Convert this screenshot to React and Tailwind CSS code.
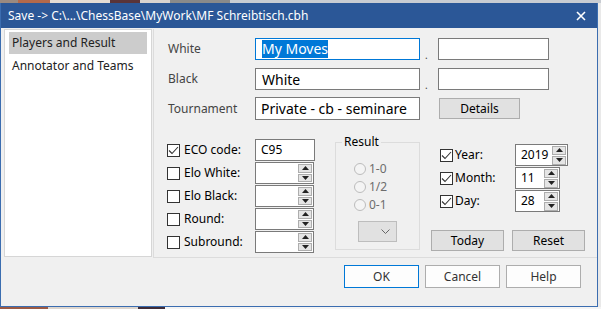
import React from "react";

function Check({ checked }) {
  return (
    <span className="w-[13px] h-[13px] border border-[#333333] bg-white flex items-center justify-center shrink-0">
      {checked && (
        <svg width="11" height="9" viewBox="0 0 11 9">
          <path d="M1 4.5 L4 7.5 L10 1" fill="none" stroke="#333333" strokeWidth="1.1" />
        </svg>
      )}
    </span>
  );
}

function SpinButtons() {
  return (
    <div className="flex flex-col gap-[1px] py-[1px] pr-[1px]">
      <div className="w-[14px] h-[9px] border border-[#adadad] bg-[#e5e5e5] flex items-center justify-center">
        <svg width="7" height="4" viewBox="0 0 7 4"><path d="M0 4 L3.5 0 L7 4 Z" fill="#222" /></svg>
      </div>
      <div className="w-[14px] h-[9px] border border-[#adadad] bg-[#e5e5e5] flex items-center justify-center">
        <svg width="7" height="4" viewBox="0 0 7 4"><path d="M0 0 L3.5 4 L7 0 Z" fill="#222" /></svg>
      </div>
    </div>
  );
}

function Radio({ label }) {
  return (
    <div className="flex items-center h-[18px] gap-[3px]">
      <span className="w-[12px] h-[12px] rounded-full border border-[#bcbcbc] bg-[#f4f4f4] shrink-0" />
      <span className="text-[12px] text-[#6d6d6d]">{label}</span>
    </div>
  );
}

export default function App() {
  const checkRows = [
    { label: "Elo White:" },
    { label: "Elo Black:" },
    { label: "Round:" },
    { label: "Subround:" },
  ];

  return (
    <div className="w-[601px] h-[309px] bg-[#e9e9e9] overflow-hidden font-['Segoe_UI','Noto_Sans',sans-serif] relative">
      {/* background strip */}
      <div className="flex h-[3px]">
        <div className="w-[18px] bg-[#9a8a80]" />
        <div className="w-[32px] bg-[#b4694a]" />
        <div className="w-[60px] bg-[#e6ddd4]" />
        <div className="w-[30px] bg-[#5a3438]" />
        <div className="w-[30px] bg-[#d9d3cf]" />
        <div className="w-[60px] bg-[#8a8a8a]" />
        <div className="flex-1 bg-[#c8ccd2]" />
      </div>

      {/* dialog */}
      <div className="w-[598px] h-[304px] flex flex-col bg-[#f0f0f0] border-x border-b border-[#3b6db0]">
        {/* title bar */}
        <div className="h-[25px] bg-[#2b5797] flex items-center justify-between pl-[7px] pr-[11px] text-white text-[12px] shrink-0">
          <span>Save -&gt; C:\...\ChessBase\MyWork\MF Schreibtisch.cbh</span>
          <svg width="10" height="10" viewBox="0 0 10 10">
            <path d="M1 1 L9 9 M9 1 L1 9" stroke="white" strokeWidth="1.6" />
          </svg>
        </div>

        {/* main */}
        <div className="flex h-[230px] pl-[3px] pt-[1px] shrink-0">
          {/* list */}
          <div className="w-[148px] h-[228px] bg-white border border-[#d6d6d6] pt-[2px] px-[4px] text-[12px] text-[#222]">
            <div className="h-[22px] bg-[#cccccc] flex items-center px-[3px]">Players and Result</div>
            <div className="h-[24px] flex items-center px-[3px]">Annotator and Teams</div>
          </div>

          {/* right panel */}
          <div className="flex-1 ml-[1px] border-l border-b border-[#dcdcdc] pl-[14px] pt-[9px]">
            <div className="flex flex-col gap-[8px]">
              <div className="flex items-center h-[22px]">
                <span className="w-[87px] text-[12px] text-[#444]">White</span>
                <div className="w-[165px] h-[22px] border border-[#0078d7] bg-white flex items-center pl-[6px]">
                  <span className="bg-[#0078d7] text-white text-[14px] leading-[18px]">My Moves</span>
                </div>
                <span className="w-[18px] h-[22px] flex items-end pl-[5px] text-[10px] leading-[10px] text-[#444]">.</span>
                <div className="w-[111px] h-[22px] border border-[#7a7a7a] bg-white" />
              </div>
              <div className="flex items-center h-[22px]">
                <span className="w-[87px] text-[12px] text-[#444]">Black</span>
                <div className="w-[165px] h-[22px] border border-[#7a7a7a] bg-white flex items-center pl-[6px] text-[14px] text-black">
                  White
                </div>
                <span className="w-[18px] h-[22px] flex items-end pl-[5px] text-[10px] leading-[10px] text-[#444]">.</span>
                <div className="w-[111px] h-[22px] border border-[#7a7a7a] bg-white" />
              </div>
            </div>

            <div className="flex items-center h-[23px] mt-[7px]">
              <span className="w-[87px] text-[12px] text-[#444]">Tournament</span>
              <div className="w-[165px] h-[23px] border border-[#7a7a7a] bg-white flex items-center pl-[5px] text-[14px] text-black">
                Private - cb - seminare
              </div>
              <div className="ml-[19px] w-[81px] h-[21px] border border-[#adadad] bg-[#e1e1e1] flex items-center justify-center text-[12px] text-black">
                Details
              </div>
            </div>

            {/* lower section */}
            <div className="flex mt-[19px]">
              {/* col A */}
              <div className="flex flex-col gap-[1px] w-[148px] -ml-[1px]">
                <div className="flex items-center h-[22px]">
                  <div className="w-[88px] flex items-center gap-[4px]">
                    <Check checked />
                    <span className="text-[12px] text-black">ECO code:</span>
                  </div>
                  <div className="w-[60px] h-[22px] border border-[#7a7a7a] bg-white flex items-center pl-[5px] text-[12px] text-black">
                    C95
                  </div>
                </div>
                {checkRows.map((r) => (
                  <div key={r.label} className="flex items-center h-[22px]">
                    <div className="w-[88px] flex items-center gap-[4px]">
                      <Check />
                      <span className="text-[12px] text-black">{r.label}</span>
                    </div>
                    <div className="w-[59px] h-[22px] border border-[#7a7a7a] bg-white flex justify-end">
                      <SpinButtons />
                    </div>
                  </div>
                ))}
              </div>

              {/* col B: result */}
              <fieldset className="ml-[20px] mt-[-4px] w-[85px] h-[115px] border border-[#dcdcdc] px-0">
                <legend className="ml-[6px] px-[2px] text-[12px] text-black leading-[14px]">Result</legend>
                <div className="flex flex-col items-start pl-[18px] pt-[11px]">
                  <Radio label="1-0" />
                  <Radio label="1/2" />
                  <Radio label="0-1" />
                  <div className="mt-[7px] ml-[4px] w-[39px] h-[21px] shrink-0 border border-[#bdbdbd] bg-[#e1e1e1] flex items-center justify-end pr-[6px]">
                    <svg width="9" height="5" viewBox="0 0 9 5"><path d="M0.5 0.5 L4.5 4.5 L8.5 0.5" fill="none" stroke="#666" strokeWidth="1" /></svg>
                  </div>
                </div>
              </fieldset>

              {/* col C */}
              <div className="ml-[11px] flex flex-col">
                <div className="flex flex-col pl-[9px] mt-[5px] gap-[1px]">
                  <div className="flex items-center h-[22px]">
                    <div className="w-[75px] flex items-center gap-[2px]">
                      <Check checked />
                      <span className="text-[12px] text-black">Year:</span>
                    </div>
                    <div className="w-[53px] h-[22px] border border-[#7a7a7a] bg-white flex items-center justify-between pl-[5px] text-[12px] text-black">
                      2019
                      <SpinButtons />
                    </div>
                  </div>
                  <div className="flex items-center h-[22px]">
                    <div className="w-[75px] flex items-center gap-[2px]">
                      <Check checked />
                      <span className="text-[12px] text-black">Month:</span>
                    </div>
                    <div className="w-[45px] h-[22px] border border-[#7a7a7a] bg-white flex items-center justify-between pl-[5px] text-[12px] text-black">
                      11
                      <SpinButtons />
                    </div>
                  </div>
                  <div className="flex items-center h-[22px]">
                    <div className="w-[75px] flex items-center gap-[2px]">
                      <Check checked />
                      <span className="text-[12px] text-black">Day:</span>
                    </div>
                    <div className="w-[45px] h-[22px] border border-[#7a7a7a] bg-white flex items-center justify-between pl-[5px] text-[12px] text-black">
                      28
                      <SpinButtons />
                    </div>
                  </div>
                </div>
                <div className="flex gap-[8px] mt-[18px]">
                  <div className="w-[73px] h-[21px] border border-[#adadad] bg-[#e1e1e1] flex items-center justify-center text-[12px] text-black">
                    Today
                  </div>
                  <div className="w-[73px] h-[21px] border border-[#adadad] bg-[#e1e1e1] flex items-center justify-center text-[12px] text-black">
                    Reset
                  </div>
                </div>
              </div>
            </div>
          </div>
        </div>

        {/* bottom buttons */}
        <div className="flex justify-end gap-[6px] pr-[16px] pt-[7px]">
          <div className="w-[75px] h-[23px] border border-[#0078d7] bg-[#fdfdfd] flex items-center justify-center text-[12px] text-[#333]">
            OK
          </div>
          <div className="w-[75px] h-[23px] border border-[#adadad] bg-[#fdfdfd] flex items-center justify-center text-[12px] text-[#333]">
            Cancel
          </div>
          <div className="w-[75px] h-[23px] border border-[#adadad] bg-[#fdfdfd] flex items-center justify-center text-[12px] text-[#333]">
            Help
          </div>
        </div>
      </div>

      <div className="flex h-[2px]">
        <div className="w-[48px] bg-[#9c5a44]" />
        <div className="w-[90px] bg-[#ddd6cf]" />
        <div className="w-[27px] bg-[#3e2c38]" />
        <div className="flex-1 bg-[#f4f4f4]" />
      </div>
    </div>
  );
}
